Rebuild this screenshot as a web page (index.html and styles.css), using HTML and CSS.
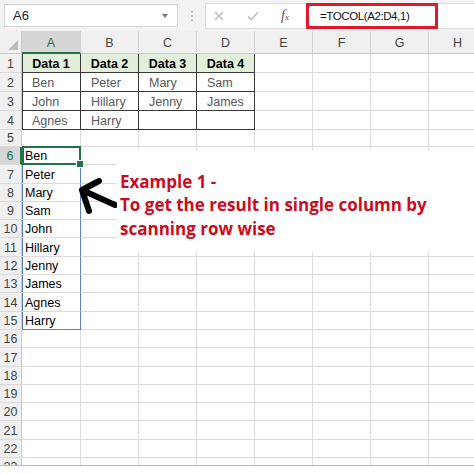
FILE: index.html
```html
<!DOCTYPE html>
<html>
<head>
<meta charset="utf-8">
<link rel="stylesheet" href="styles.css">
</head>
<body>
<div class="fbar">
  <div class="namebox"><span>A6</span><span class="caret"></span></div>
  <div class="dots"><span></span><span></span><span></span></div>
  <div class="fxarea">
    <svg class="ix" width="10" height="10" viewBox="0 0 10 10"><path d="M1 1L9 9M9 1L1 9" stroke="#b8b8b8" stroke-width="1.3" fill="none"/></svg>
    <svg class="ick" width="12" height="10" viewBox="0 0 12 10"><path d="M1 5.5L4.3 8.8L11 1.2" stroke="#b8b8b8" stroke-width="1.3" fill="none"/></svg>
    <span class="fx"><i>f</i><span class="fxx">x</span></span>
    <div class="formula">=TOCOL(A2:D4,1)</div>
  </div>
</div>
<div class="sheet">
  <div class="grid">
    <div class="corner"><span class="tri"></span></div>
    <div class="ch sel">A</div><div class="ch">B</div><div class="ch">C</div><div class="ch">D</div><div class="ch">E</div><div class="ch">F</div><div class="ch">G</div><div class="ch">H</div>

    <div class="rh">1</div><div class="c t hd tl">Data 1</div><div class="c t hd">Data 2</div><div class="c t hd">Data 3</div><div class="c t hd">Data 4</div><div class="c"></div><div class="c"></div><div class="c"></div><div class="c"></div>
    <div class="rh">2</div><div class="c t tl">Ben</div><div class="c t">Peter</div><div class="c t">Mary</div><div class="c t">Sam</div><div class="c"></div><div class="c"></div><div class="c"></div><div class="c"></div>
    <div class="rh">3</div><div class="c t tl">John</div><div class="c t">Hillary</div><div class="c t">Jenny</div><div class="c t">James</div><div class="c"></div><div class="c"></div><div class="c"></div><div class="c"></div>
    <div class="rh">4</div><div class="c t tl">Agnes</div><div class="c t">Harry</div><div class="c t"></div><div class="c t"></div><div class="c"></div><div class="c"></div><div class="c"></div><div class="c"></div>
    <div class="rh">5</div><div class="c"></div><div class="c"></div><div class="c"></div><div class="c"></div><div class="c"></div><div class="c"></div><div class="c"></div><div class="c"></div>
    <div class="rh sel">6</div><div class="c sp act">Ben</div><div class="c"></div><div class="c"></div><div class="c"></div><div class="c"></div><div class="c"></div><div class="c"></div><div class="c"></div>
    <div class="rh">7</div><div class="c sp">Peter</div><div class="c"></div><div class="c"></div><div class="c"></div><div class="c"></div><div class="c"></div><div class="c"></div><div class="c"></div>
    <div class="rh">8</div><div class="c sp">Mary</div><div class="c"></div><div class="c"></div><div class="c"></div><div class="c"></div><div class="c"></div><div class="c"></div><div class="c"></div>
    <div class="rh">9</div><div class="c sp">Sam</div><div class="c"></div><div class="c"></div><div class="c"></div><div class="c"></div><div class="c"></div><div class="c"></div><div class="c"></div>
    <div class="rh">10</div><div class="c sp">John</div><div class="c"></div><div class="c"></div><div class="c"></div><div class="c"></div><div class="c"></div><div class="c"></div><div class="c"></div>
    <div class="rh">11</div><div class="c sp">Hillary</div><div class="c"></div><div class="c"></div><div class="c"></div><div class="c"></div><div class="c"></div><div class="c"></div><div class="c"></div>
    <div class="rh">12</div><div class="c sp">Jenny</div><div class="c"></div><div class="c"></div><div class="c"></div><div class="c"></div><div class="c"></div><div class="c"></div><div class="c"></div>
    <div class="rh">13</div><div class="c sp">James</div><div class="c"></div><div class="c"></div><div class="c"></div><div class="c"></div><div class="c"></div><div class="c"></div><div class="c"></div>
    <div class="rh">14</div><div class="c sp">Agnes</div><div class="c"></div><div class="c"></div><div class="c"></div><div class="c"></div><div class="c"></div><div class="c"></div><div class="c"></div>
    <div class="rh">15</div><div class="c sp spl">Harry</div><div class="c"></div><div class="c"></div><div class="c"></div><div class="c"></div><div class="c"></div><div class="c"></div><div class="c"></div>
    <div class="rh">16</div><div class="c"></div><div class="c"></div><div class="c"></div><div class="c"></div><div class="c"></div><div class="c"></div><div class="c"></div><div class="c"></div>
    <div class="rh">17</div><div class="c"></div><div class="c"></div><div class="c"></div><div class="c"></div><div class="c"></div><div class="c"></div><div class="c"></div><div class="c"></div>
    <div class="rh">18</div><div class="c"></div><div class="c"></div><div class="c"></div><div class="c"></div><div class="c"></div><div class="c"></div><div class="c"></div><div class="c"></div>
    <div class="rh">19</div><div class="c"></div><div class="c"></div><div class="c"></div><div class="c"></div><div class="c"></div><div class="c"></div><div class="c"></div><div class="c"></div>
    <div class="rh">20</div><div class="c"></div><div class="c"></div><div class="c"></div><div class="c"></div><div class="c"></div><div class="c"></div><div class="c"></div><div class="c"></div>
    <div class="rh">21</div><div class="c"></div><div class="c"></div><div class="c"></div><div class="c"></div><div class="c"></div><div class="c"></div><div class="c"></div><div class="c"></div>
    <div class="rh">22</div><div class="c"></div><div class="c"></div><div class="c"></div><div class="c"></div><div class="c"></div><div class="c"></div><div class="c"></div><div class="c"></div>
    <div class="rh">23</div><div class="c"></div><div class="c"></div><div class="c"></div><div class="c"></div><div class="c"></div><div class="c"></div><div class="c"></div><div class="c"></div>
  </div>
</div>
<div class="hbar"></div>

<svg class="arrow" width="46" height="42" viewBox="0 0 46 42">
  <path d="M7 15L40 30M7 15L24 6M7 15L14 36" stroke="#000" stroke-width="6" stroke-linecap="round" stroke-linejoin="round" fill="none"/>
</svg>
<div class="note">
  <div>Example 1 -</div>
  <div>To get the result in single column by</div>
  <div>scanning row wise</div>
</div>
</body>
</html>
```

FILE: styles.css
```css
* { box-sizing: border-box; }
html, body { margin: 0; padding: 0; }
body {
  width: 474px;
  height: 474px;
  overflow: hidden;
  background: #fff;
  position: relative;
  font-family: "Liberation Sans", Arial, sans-serif;
}

/* formula bar */
.fbar {
  height: 31px;
  background: #f3f3f3;
  display: flex;
  align-items: flex-start;
  padding-top: 3px;
}
.namebox {
  margin-left: 4px;
  margin-top: 1px;
  width: 174px;
  height: 23px;
  background: #fff;
  border: 1px solid #d4d4d4;
  display: flex;
  align-items: center;
  justify-content: space-between;
  padding: 0 9px 0 8px;
  font-size: 13px;
  color: #222;
}
.caret {
  width: 0;
  height: 0;
  border-left: 3.5px solid transparent;
  border-right: 3.5px solid transparent;
  border-top: 4px solid #777;
}
.dots {
  width: 27px;
  height: 25px;
  display: flex;
  flex-direction: column;
  align-items: center;
  justify-content: center;
  gap: 2px;
}
.dots span {
  width: 2px;
  height: 2px;
  border-radius: 50%;
  background: #b8b8b8;
}
.fxarea {
  flex: 1;
  height: 26px;
  background: #fff;
  border: 1px solid #dcdcdc;
  border-right: none;
  display: flex;
  align-items: center;
}
.ix { margin-left: 8px; }
.ick { margin-left: 23px; }
.fx {
  margin-left: 22px;
  font-family: "Liberation Serif", serif;
  font-size: 14px;
  color: #555;
  width: 14px;
}
.fxx { font-size: 9px; font-style: italic; }
.formula {
  margin-left: 11px;
  width: 132px;
  height: 26px;
  border: 3px solid #e0182b;
  display: flex;
  align-items: center;
  padding-left: 11px;
  font-size: 11.5px;
  letter-spacing: -0.4px;
  color: #111;
}

/* sheet */
.sheet {
  height: 434px;
  overflow: hidden;
}
.grid {
  display: grid;
  grid-template-columns: 22px 59px repeat(7, 58px);
  grid-template-rows: 23px repeat(4, 19px) 17px repeat(18, 18.3px);
  width: 487px;
}
.corner {
  background: #f0f0f0;
  border-right: 1px solid #c9c9c9;
  border-bottom: 1px solid #c9c9c9;
  display: flex;
  align-items: flex-end;
  justify-content: flex-end;
  padding: 0 3px 3px 0;
}
.tri {
  width: 0;
  height: 0;
  border-left: 10px solid transparent;
  border-bottom: 10px solid #bdbdbd;
}
.ch {
  background: #f0f0f0;
  border-right: 1px solid #d2d2d2;
  border-bottom: 1px solid #c9c9c9;
  display: flex;
  align-items: center;
  justify-content: center;
  padding-top: 2px;
  font-size: 12.5px;
  color: #444;
}
.ch.sel {
  background: #d6d6d6;
  color: #217346;
  border-bottom: 2px solid #217346;
}
.rh {
  background: #f0f0f0;
  border-right: 1px solid #c9c9c9;
  border-bottom: 1px solid #dadada;
  display: flex;
  align-items: flex-end;
  justify-content: center;
  font-size: 12.5px;
  line-height: 16px;
  color: #444;
}
.rh.sel {
  background: #d6d6d6;
  color: #217346;
  border-right: 2px solid #217346;
}
.c {
  border-right: 1px solid #dcdcdc;
  border-bottom: 1px solid #dcdcdc;
  display: flex;
  align-items: flex-end;
  padding: 0 3px;
  font-size: 12.5px;
  line-height: 15px;
  white-space: nowrap;
  color: #000;
}
.c.t {
  border-right-color: #3a3a3a;
  border-bottom-color: #3a3a3a;
  color: #595959;
  padding-left: 10px;
}
.c.t.tl { box-shadow: inset 1px 0 0 #3a3a3a; }
.c.hd {
  background: #e2efda;
  font-weight: bold;
  color: #000;
  justify-content: center;
  padding-left: 3px;
}
.c.sp {
  border-right-color: #5b7fc9;
  box-shadow: inset 1px 0 0 #5b7fc9;
}
.c.spl { border-bottom-color: #5b7fc9; }
.c.act { position: relative; }
.c.act::before {
  content: "";
  position: absolute;
  left: 0;
  top: -1px;
  right: -1px;
  bottom: -1px;
  border: 2px solid #217346;
}
.c.act::after {
  content: "";
  position: absolute;
  right: -4px;
  bottom: -4px;
  width: 6px;
  height: 6px;
  background: #217346;
  border: 1px solid #fff;
}

.hbar {
  height: 9px;
  border-top: 1px solid #bcbcbc;
  background: #fff;
}

/* annotation */
.arrow {
  position: absolute;
  left: 75px;
  top: 175px;
}
.note {
  position: absolute;
  left: 117px;
  top: 150px;
  width: 357px;
  height: 102px;
  background: #fff;
  padding: 19.5px 0 0 3px;
  font-family: "Open Sans", sans-serif;
  font-weight: 700;
  font-size: 17px;
  line-height: 23.5px;
  color: #cc0c1c;
  white-space: nowrap;
}
```
